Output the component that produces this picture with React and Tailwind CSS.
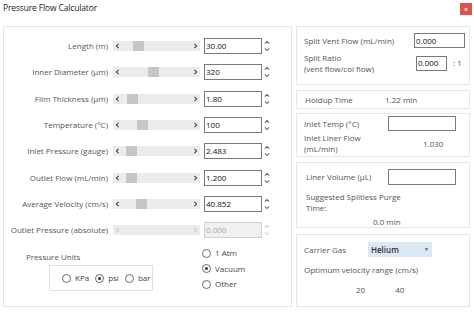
import React from "react";

const font = { fontFamily: '"Open Sans", "Noto Sans", sans-serif' };

function Chevron({ dir, className }) {
  const d = {
    left: "M4 1 L1.5 3.5 L4 6",
    right: "M1.5 1 L4 3.5 L1.5 6",
    up: "M1 4 L3.5 1.5 L6 4",
    down: "M1 1.5 L3.5 4 L6 1.5",
  }[dir];
  const vb = dir === "left" || dir === "right" ? "0 0 5.5 7" : "0 0 7 5.5";
  const w = dir === "left" || dir === "right" ? 5 : 6;
  const h = dir === "left" || dir === "right" ? 6 : 5;
  return (
    <svg width={w} height={h} viewBox={vb} className={className}>
      <path d={d} fill="none" stroke="currentColor" strokeWidth="1.2" />
    </svg>
  );
}

function Row({ label, value, thumb, disabled }) {
  return (
    <div className="flex items-center h-[26.3px]">
      <div className="w-[104px] text-right text-[8px] text-[#555] whitespace-nowrap">{label}</div>
      <div className={`ml-[5px] w-[87px] h-[10px] bg-[#ececec] relative flex items-center justify-between px-[2px] ${disabled ? "text-[#c8c8c8]" : "text-[#333]"}`}>
        <Chevron dir="left" />
        <Chevron dir="right" />
        {!disabled && (
          <div className="absolute top-0 h-[10px] w-[11px] bg-[#c6c6c6]" style={{ left: thumb }} />
        )}
      </div>
      <div
        className={`ml-[4px] w-[58px] h-[16px] border flex items-center pl-[1px] text-[8px] ${
          disabled ? "border-[#d0d0d0] bg-[#f0f0f0] text-[#a8a8a8]" : "border-[#7a7a7a] bg-white text-[#111]"
        }`}
      >
        {value}
      </div>
      <div className={`ml-[2px] flex flex-col items-center justify-center gap-[2px] ${disabled ? "text-[#d0d0d0]" : "text-[#666]"}`}>
        <Chevron dir="up" />
        <Chevron dir="down" />
      </div>
    </div>
  );
}

function Radio({ checked, label }) {
  return (
    <div className="flex items-center gap-[4px] text-[8px] leading-[10px] text-[#444]">
      <div className="w-[9px] h-[9px] rounded-full border border-[#6a6a6a] bg-white flex items-center justify-center">
        {checked && <div className="w-[3px] h-[3px] rounded-full bg-[#333]" />}
      </div>
      <span>{label}</span>
    </div>
  );
}

export default function App() {
  const rows = [
    ["Length (m)", "30.00", 20],
    ["Inner Diameter (µm)", "320", 35],
    ["Film Thickness (µm)", "1.80", 14],
    ["Temperature (°C)", "100", 24],
    ["Inlet Pressure (gauge)", "2.483", 13],
    ["Outlet Flow (mL/min)", "1.200", 13],
    ["Average Velocity (cm/s)", "40.852", 23],
  ];
  return (
    <div className="w-[474px] h-[320px] bg-white relative overflow-hidden text-[#444]" style={font}>
      <div className="h-[26px] flex items-start justify-between px-[3px] pt-[2px]">
        <div className="text-[8.5px] font-medium text-[#222] tracking-[-0.15px]">Pressure Flow Calculator</div>
        <div className="mt-[1px] mr-[-1px] w-[12px] h-[12px] bg-[#d9534f] flex items-center justify-center text-white text-[7px] leading-none font-bold">
          ×
        </div>
      </div>
      <div className="flex px-[3px] gap-[4px]">
        <div className="w-[289px] h-[281px] border border-[#e6e6e6] flex flex-col pt-[6px]">
          {rows.map(([l, v, t]) => (
            <Row key={l} label={l} value={v} thumb={t} />
          ))}
          <Row label="Outlet Pressure (absolute)" value="0.000" disabled />
          <div className="flex mt-[2px]">
            <div className="w-[198px] flex flex-col">
              <div className="pl-[22px] pt-[6px] text-[8px] text-[#555]">Pressure Units</div>
              <div className="ml-[45px] mt-[2px] w-[104px] h-[26px] border border-[#e0e0e0] flex items-center pl-[12px] gap-[6px]">
                <Radio label="KPa" />
                <Radio label="psi" checked />
                <Radio label="bar" />
              </div>
            </div>
            <div className="flex flex-col gap-[5.5px] pt-[3px]">
              <Radio label="1 Atm" />
              <Radio label="Vacuum" checked />
              <Radio label="Other" />
            </div>
          </div>
        </div>
        <div className="w-[174px] flex flex-col text-[8px] text-[#555]">
          <div className="h-[59px] border border-[#e6e6e6] pl-[7px] pr-[4px] pt-[6px]">
            <div className="flex items-center justify-between">
              <span>Split Vent Flow (mL/min)</span>
              <div className="w-[51px] h-[15px] border border-[#7a7a7a] text-[#111] pl-[1px] flex items-center">0.000</div>
            </div>
            <div className="flex items-center mt-[4px]">
              <div className="leading-[11px] w-[112px]">
                <div>Split Ratio</div>
                <div>(vent flow/col flow)</div>
              </div>
              <div className="w-[31px] h-[15px] border border-[#7a7a7a] text-[#111] pl-[1px] flex items-center">0.000</div>
              <span className="ml-[6px]">: 1</span>
            </div>
          </div>
          <div className="mt-[5px] h-[19px] border border-[#e6e6e6] flex items-center pl-[8px]">
            <span className="w-[80px]">Holdup Time</span>
            <span>1.22 min</span>
          </div>
          <div className="mt-[4px] h-[44px] border border-[#e6e6e6] pl-[7px] pt-[2px]">
            <div className="flex items-center">
              <span className="w-[84px]">Inlet Temp (°C)</span>
              <div className="w-[68px] h-[15px] border border-[#7a7a7a]" />
            </div>
            <div className="flex items-center leading-[11px] mt-[1px]">
              <div className="w-[119px]">
                <div>Inlet Liner Flow</div>
                <div>(mL/min)</div>
              </div>
              <span>1.030</span>
            </div>
          </div>
          <div className="mt-[5px] h-[66px] border border-[#e6e6e6] pl-[9px] pt-[6px]">
            <div className="flex items-center">
              <span className="w-[82px]">Liner Volume (µL)</span>
              <div className="w-[68px] h-[16px] border border-[#7a7a7a]" />
            </div>
            <div className="leading-[11px] mt-[6px]">
              <div>Suggested Splitless Purge</div>
              <div>Time:</div>
            </div>
            <div className="pl-[67px] mt-[3px]">0.0 min</div>
          </div>
          <div className="mt-[6px] h-[73px] border border-[#e6e6e6] pl-[7px] pt-[7px]">
            <div className="flex items-center">
              <span className="w-[64px]">Carrier Gas</span>
              <div className="w-[64px] h-[15px] bg-[#dce8f4] flex items-center justify-between pl-[3px] pr-[3px] text-[#333] font-semibold">
                <span>Helium</span>
                <span className="text-[5px] text-[#555]">▼</span>
              </div>
            </div>
            <div className="mt-[7px]">Optimum velocity range (cm/s)</div>
            <div className="flex mt-[8px] pl-[52px] gap-[30px]">
              <span>20</span>
              <span>40</span>
            </div>
          </div>
        </div>
      </div>
    </div>
  );
}
